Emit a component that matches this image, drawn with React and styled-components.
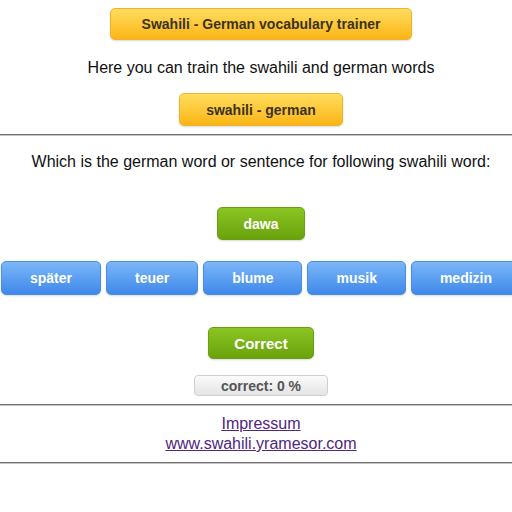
import React from 'react';
import styled, { createGlobalStyle } from 'styled-components';

const GlobalStyle = createGlobalStyle`
  body {
    margin: 0;
    background: #fff;
    font-family: "Liberation Sans", Arial, sans-serif;
    overflow: hidden;
  }
`;

// the original page is a little wider than the window, so its centre sits at ~261px
const Page = styled.div`
  width: 522px;
  text-align: center;
  color: #111;
`;

const Section = styled.div`
  display: flex;
  flex-direction: column;
  align-items: center;
  padding-top: ${(p) => p.top || 0}px;
  padding-bottom: ${(p) => p.bottom || 0}px;
`;

const Rule = styled.div`
  height: 0;
  border-top: 1px solid #707070;
  border-bottom: 1px solid #c4c4c4;
`;

const colours = {
  yellow: { top: '#ffdd5e', bottom: '#fbb515', border: '#eeb42e', text: '#3b3320' },
  green: { top: '#8bc522', bottom: '#6aa20c', border: '#6c9e12', text: '#fff' },
  blue: { top: '#7cb6f8', bottom: '#3e89ea', border: '#4a8fe3', text: '#fff' },
};

const Button = styled.div`
  box-sizing: border-box;
  display: inline-flex;
  align-items: center;
  justify-content: center;
  flex-shrink: 0;
  height: ${(p) => p.h || 33}px;
  padding: 0 ${(p) => p.pad || 25}px;
  margin-top: ${(p) => p.mt || 0}px;
  border-radius: 5px;
  border: 1px solid ${(p) => colours[p.kind].border};
  background: linear-gradient(${(p) => colours[p.kind].top}, ${(p) => colours[p.kind].bottom});
  box-shadow: 0 1px 2px rgba(0, 0, 0, 0.15);
  color: ${(p) => colours[p.kind].text};
  font-size: ${(p) => p.size || 14}px;
  font-weight: bold;
  white-space: nowrap;
`;

const Line = styled.div`
  font-size: 16px;
  line-height: 20px;
  margin-top: ${(p) => p.mt || 0}px;
  white-space: nowrap;
`;

const AnswerRow = styled.div`
  display: flex;
  justify-content: center;
  gap: 5px;
  margin-top: 21px;
  align-self: stretch;
`;

const Score = styled.div`
  box-sizing: border-box;
  height: 21px;
  margin-top: 16px;
  padding: 0 26px;
  display: inline-flex;
  align-items: center;
  border: 1px solid #cfcfcf;
  border-radius: 4px;
  background: linear-gradient(#fbfbfb, #e4e4e4);
  color: #555;
  font-size: 14px;
  font-weight: bold;
`;

const Link = styled.a`
  font-size: 16px;
  line-height: 20px;
  color: #4f2683;
  text-decoration: underline;
`;

const answers = ['später', 'teuer', 'blume', 'musik', 'medizin'];

export default function App() {
  return (
    <Page>
      <GlobalStyle />
      <Section top={8} bottom={8}>
        <Button kind="yellow" h={32} pad={31}>Swahili - German vocabulary trainer</Button>
        <Line mt={18}>Here you can train the swahili and german words</Line>
        <Button kind="yellow" mt={15} pad={26}>swahili - german</Button>
      </Section>
      <Rule />
      <Section top={16} bottom={8}>
        <Line>Which is the german word or sentence for following swahili word:</Line>
        <Button kind="green" mt={35}>dawa</Button>
        <AnswerRow>
          {answers.map((a) => (
            <Button key={a} kind="blue" h={34} pad={28}>{a}</Button>
          ))}
        </AnswerRow>
        <Button kind="green" mt={32} h={32} size={15}>Correct</Button>
        <Score>correct: 0 %</Score>
      </Section>
      <Rule />
      <Section top={8} bottom={8}>
        <Link href="#">Impressum</Link>
        <Link href="#">www.swahili.yramesor.com</Link>
      </Section>
      <Rule />
    </Page>
  );
}
